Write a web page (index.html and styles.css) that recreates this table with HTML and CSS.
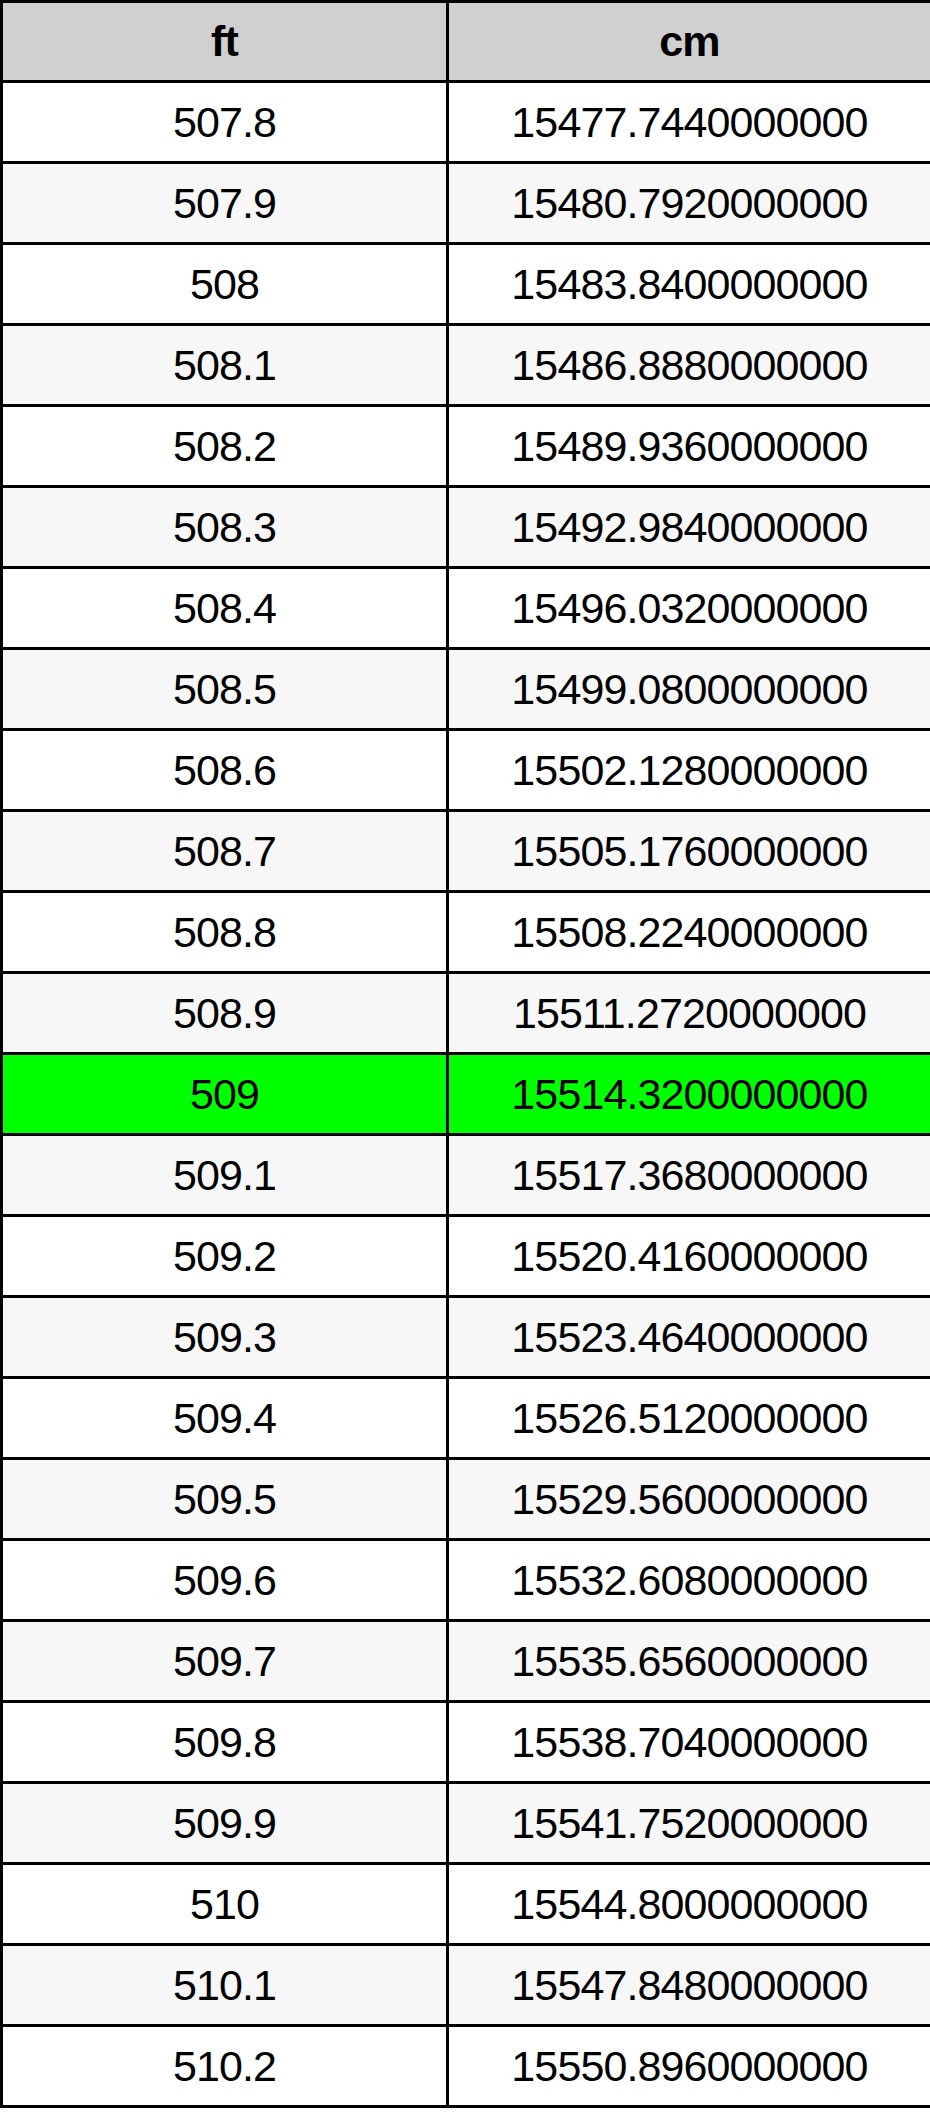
FILE: index.html
```html
<!DOCTYPE html>
<html>
<head>
<meta charset="utf-8">
<link rel="stylesheet" href="styles.css">
</head>
<body>
<table class="conv">
<colgroup><col class="c1"><col class="c2"></colgroup>
<thead>
<tr><th>ft</th><th>cm</th></tr>
</thead>
<tbody>
<tr><td>507.8</td><td>15477.7440000000</td></tr>
<tr><td>507.9</td><td>15480.7920000000</td></tr>
<tr><td>508</td><td>15483.8400000000</td></tr>
<tr><td>508.1</td><td>15486.8880000000</td></tr>
<tr><td>508.2</td><td>15489.9360000000</td></tr>
<tr><td>508.3</td><td>15492.9840000000</td></tr>
<tr><td>508.4</td><td>15496.0320000000</td></tr>
<tr><td>508.5</td><td>15499.0800000000</td></tr>
<tr><td>508.6</td><td>15502.1280000000</td></tr>
<tr><td>508.7</td><td>15505.1760000000</td></tr>
<tr><td>508.8</td><td>15508.2240000000</td></tr>
<tr><td>508.9</td><td>15511.2720000000</td></tr>
<tr class="hl"><td>509</td><td>15514.3200000000</td></tr>
<tr><td>509.1</td><td>15517.3680000000</td></tr>
<tr><td>509.2</td><td>15520.4160000000</td></tr>
<tr><td>509.3</td><td>15523.4640000000</td></tr>
<tr><td>509.4</td><td>15526.5120000000</td></tr>
<tr><td>509.5</td><td>15529.5600000000</td></tr>
<tr><td>509.6</td><td>15532.6080000000</td></tr>
<tr><td>509.7</td><td>15535.6560000000</td></tr>
<tr><td>509.8</td><td>15538.7040000000</td></tr>
<tr><td>509.9</td><td>15541.7520000000</td></tr>
<tr><td>510</td><td>15544.8000000000</td></tr>
<tr><td>510.1</td><td>15547.8480000000</td></tr>
<tr><td>510.2</td><td>15550.8960000000</td></tr>
</tbody>
</table>
</body>
</html>
```

FILE: styles.css
```css
html, body {
  margin: 0;
  padding: 0;
  background: #ffffff;
}

.conv {
  width: 930px;
  border-collapse: collapse;
  table-layout: fixed;
  font-family: "Liberation Sans", Arial, sans-serif;
  font-size: 43px;
  letter-spacing: -0.9px;
  color: #000;
}

.conv .c1 { width: 446px; }
.conv .c2 { width: 484px; }

.conv th,
.conv td {
  border: 3px solid #000;
  padding: 0;
  text-align: center;
  vertical-align: middle;
  line-height: 1;
}

.conv th {
  height: 77px;
  background: #d0d0d0;
  font-weight: bold;
}

.conv td {
  height: 78px;
}

.conv tbody tr:nth-child(odd) td { background: #ffffff; }
.conv tbody tr:nth-child(even) td { background: #f7f7f7; }
.conv tbody tr.hl td { background: #00ff00; }
```
